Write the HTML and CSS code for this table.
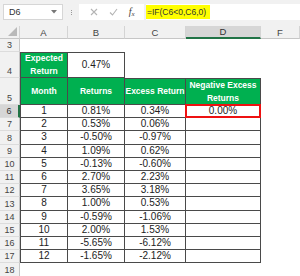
FILE: index.html
```html
<!DOCTYPE html>
<html>
<head>
<meta charset="utf-8">
<link rel="stylesheet" href="styles.css">
</head>
<body>
<div class="toolbar">
  <div class="namebox"><span>D6</span><svg class="dd" width="6" height="4" viewBox="0 0 6 4"><path d="M0 0h6L3 3.5z" fill="#777"/></svg></div>
  <div class="grip"><i></i><i></i><i></i></div>
  <div class="fxbox">
    <svg width="8" height="8" viewBox="0 0 8 8"><path d="M1 1l6 6M7 1L1 7" stroke="#b4b4b4" stroke-width="1.1"/></svg>
    <svg width="9" height="8" viewBox="0 0 9 8"><path d="M1 4.5l2.5 2.5L8 1" stroke="#b4b4b4" stroke-width="1.1" fill="none"/></svg>
    <span class="fx">f<sub>x</sub></span>
  </div>
  <div class="formula"><span class="hl">=IF(C6&lt;0,C6,0)</span></div>
</div>
<div class="sheet">
  <div class="corner"><svg width="9" height="9" viewBox="0 0 9 9"><path d="M9 0V9H0z" fill="#b9b9b9"/></svg></div>
  <div class="ch">A</div><div class="ch">B</div><div class="ch">C</div><div class="ch sel">D</div><div class="ch">F</div>

  <div class="rh">3</div><div></div><div></div><div></div><div></div><div></div>

  <div class="rh">4</div><div class="c g bl bt">Expected<br>Return</div><div class="c bt">0.47%</div><div></div><div></div><div></div>

  <div class="rh">5</div><div class="c g bl">Month</div><div class="c g">Returns</div><div class="c g bt">Excess Return</div><div class="c g bt">Negative Excess<br>Returns</div><div></div>

  <div class="rh rsel">6</div><div class="c bl">1</div><div class="c">0.81%</div><div class="c">0.34%</div><div class="c active">0.00%</div><div></div>
  <div class="rh">7</div><div class="c bl">2</div><div class="c">0.53%</div><div class="c">0.06%</div><div class="c"></div><div></div>
  <div class="rh">8</div><div class="c bl">3</div><div class="c">-0.50%</div><div class="c">-0.97%</div><div class="c"></div><div></div>
  <div class="rh">9</div><div class="c bl">4</div><div class="c">1.09%</div><div class="c">0.62%</div><div class="c"></div><div></div>
  <div class="rh">10</div><div class="c bl">5</div><div class="c">-0.13%</div><div class="c">-0.60%</div><div class="c"></div><div></div>
  <div class="rh">11</div><div class="c bl">6</div><div class="c">2.70%</div><div class="c">2.23%</div><div class="c"></div><div></div>
  <div class="rh">12</div><div class="c bl">7</div><div class="c">3.65%</div><div class="c">3.18%</div><div class="c"></div><div></div>
  <div class="rh">13</div><div class="c bl">8</div><div class="c">1.00%</div><div class="c">0.53%</div><div class="c"></div><div></div>
  <div class="rh">14</div><div class="c bl">9</div><div class="c">-0.59%</div><div class="c">-1.06%</div><div class="c"></div><div></div>
  <div class="rh">15</div><div class="c bl">10</div><div class="c">2.00%</div><div class="c">1.53%</div><div class="c"></div><div></div>
  <div class="rh">16</div><div class="c bl">11</div><div class="c">-5.65%</div><div class="c">-6.12%</div><div class="c"></div><div></div>
  <div class="rh">17</div><div class="c bl">12</div><div class="c">-1.65%</div><div class="c">-2.12%</div><div class="c"></div><div></div>

  <div class="rh last">18</div><div></div><div></div><div></div><div></div><div></div>
</div>
</body>
</html>
```
FILE: styles.css
```css
html, body {
  margin: 0;
  padding: 0;
}
body {
  width: 300px;
  height: 276px;
  overflow: hidden;
  background: #fff;
  font-family: "Liberation Sans", Arial, sans-serif;
  color: #222;
}
.toolbar {
  height: 26px;
  box-sizing: border-box;
  padding-top: 4px;
  background: #f1f1f1;
  display: flex;
  align-items: flex-start;
}
.namebox {
  margin-left: 3px;
  width: 60px;
  height: 16px;
  box-sizing: border-box;
  background: #fff;
  border: 1px solid #d6d6d6;
  display: flex;
  align-items: center;
  justify-content: space-between;
  padding: 0 5px 0 5px;
  font-size: 9px;
  color: #333;
}
.grip {
  width: 16px;
  height: 16px;
  display: flex;
  flex-direction: column;
  align-items: center;
  justify-content: center;
  gap: 1px;
}
.grip i {
  width: 1px;
  height: 1px;
  background: #9a9a9a;
}
.fxbox {
  width: 65px;
  height: 16px;
  background: #fff;
  display: flex;
  align-items: center;
  justify-content: space-around;
  padding: 0 4px 0 6px;
  box-sizing: border-box;
}
.fx {
  font-family: "Liberation Serif", serif;
  font-style: italic;
  font-size: 10px;
  color: #444;
}
.fx sub {
  font-size: 7px;
  vertical-align: -1px;
}
.formula {
  flex: 1;
  height: 16px;
  margin-left: 2px;
  background: #fff;
  display: flex;
  align-items: center;
}
.hl {
  background: #ffff00;
  height: 14px;
  width: 64px;
  display: flex;
  align-items: center;
  padding-left: 1px;
  box-sizing: border-box;
  font-size: 8.5px;
  color: #333;
}
.sheet {
  display: grid;
  grid-template-columns: 20px 48px 57px 61px 75px 1fr;
  grid-template-rows: 13px 13px 26px 27px repeat(12, 13.2px) 1fr;
  height: 250px;
}
.sheet > div {
  box-sizing: border-box;
  min-width: 0;
}
.corner {
  background: #f1f1f1;
  border-right: 1px solid #d4d4d4;
  border-bottom: 1px solid #c6c6c6;
  display: flex;
  align-items: flex-end;
  justify-content: flex-end;
  padding: 0 2px 2px 0;
}
.ch {
  background: #f1f1f1;
  border-right: 1px solid #d4d4d4;
  border-bottom: 1px solid #c6c6c6;
  font-size: 9.5px;
  color: #444;
  display: flex;
  align-items: center;
  justify-content: center;
}
.ch.sel {
  background: #d6d6d6;
  border-bottom: 2px solid #217346;
  color: #333;
}
.rh {
  background: #f1f1f1;
  border-right: 1px solid #c6c6c6;
  border-bottom: 1px solid #dcdcdc;
  font-size: 9px;
  color: #444;
  display: flex;
  align-items: flex-end;
  justify-content: center;
  padding-bottom: 1px;
}
.rh.rsel {
  background: #d6d6d6;
  border-right: 2px solid #217346;
  color: #333;
}
.rh.last {
  border-bottom: none;
}
.c {
  border-right: 1px solid #4a4a4a;
  border-bottom: 1px solid #4a4a4a;
  font-size: 10px;
  display: flex;
  align-items: center;
  justify-content: center;
  text-align: center;
  line-height: 12px;
  white-space: nowrap;
}
.c.bl {
  border-left: 1px solid #4a4a4a;
}
.c.bt {
  border-top: 1px solid #4a4a4a;
}
.c.g {
  background: #00b050;
  color: #fff;
  font-weight: bold;
  font-size: 8.5px;
  line-height: 13px;
}
.active {
  position: relative;
}
.active::after {
  content: "";
  position: absolute;
  left: -1px;
  top: -1px;
  right: -1px;
  bottom: -1px;
  border: 2px solid #ee1111;
}
```
